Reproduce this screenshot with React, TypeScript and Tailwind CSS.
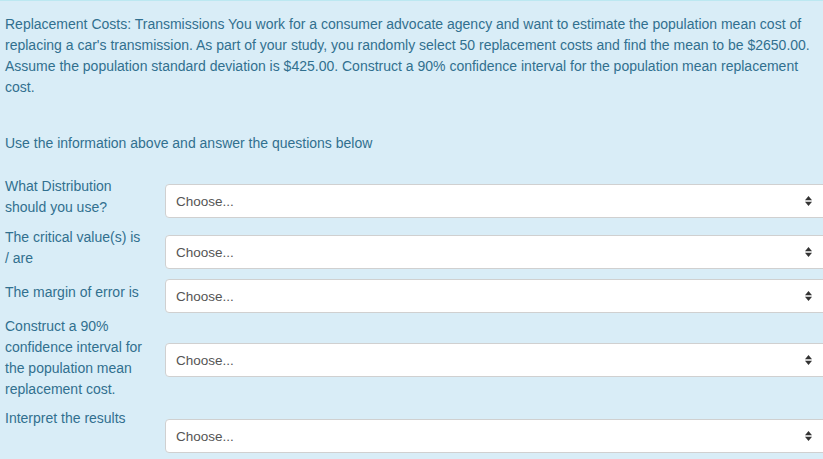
import React from "react";

const Arrows = () => (
  <svg width="7" height="10" viewBox="0 0 7 10" className="shrink-0">
    <path d="M0 4.2 L3.5 0 L7 4.2 Z" fill="#333" />
    <path d="M0 5.8 L3.5 10 L7 5.8 Z" fill="#333" />
  </svg>
);

const Choose = ({ className = "" }: { className?: string }) => (
  <div
    className={`flex-1 -mr-[10px] h-[34px] flex items-center justify-between pl-[10px] pr-[15px] bg-white border border-[#d0d0d0] rounded-[4px] text-[13.5px] text-[#555] ${className}`}
  >
    <span>Choose...</span>
    <Arrows />
  </div>
);

export default function App() {
  return (
    <div className="min-h-screen overflow-hidden bg-[#d9edf7] border-t border-[#bce8f1] text-[#31708f] font-['Liberation_Sans',Arial,sans-serif] text-[14px] leading-[21px]">
      <div className="px-[5px] pt-[13px] pb-[6px]">
        <p>
          Replacement Costs: Transmissions You work for a consumer advocate agency and want to estimate the population
          mean cost of replacing a car's transmission. As part of your study, you randomly select 50 replacement costs and
          find the mean to be $2650.00. Assume the population standard deviation is $425.00. Construct a 90% confidence
          interval for the population mean replacement cost.
        </p>
        <p className="mt-[35px]">Use the information above and answer the questions below</p>

        <div className="mt-[22px] flex items-start gap-[20px]">
          <div className="w-[140px] shrink-0">What Distribution should you use?</div>
          <Choose className="mt-[8px]" />
        </div>

        <div className="mt-[9px] flex items-start gap-[20px]">
          <div className="w-[140px] shrink-0">The critical value(s) is / are</div>
          <Choose className="mt-[8px]" />
        </div>

        <div className="mt-[10px] flex items-start gap-[20px]">
          <div className="w-[140px] shrink-0 mt-[3px]">The margin of error is</div>
          <Choose />
        </div>

        <div className="mt-[3px] flex items-start gap-[20px]">
          <div className="w-[140px] shrink-0">Construct a 90% confidence interval for the population mean replacement cost.</div>
          <Choose className="mt-[27px]" />
        </div>

        <div className="mt-[8px] flex items-start gap-[20px]">
          <div className="w-[140px] shrink-0">Interpret the results</div>
          <Choose className="mt-[11px]" />
        </div>
      </div>
    </div>
  );
}
